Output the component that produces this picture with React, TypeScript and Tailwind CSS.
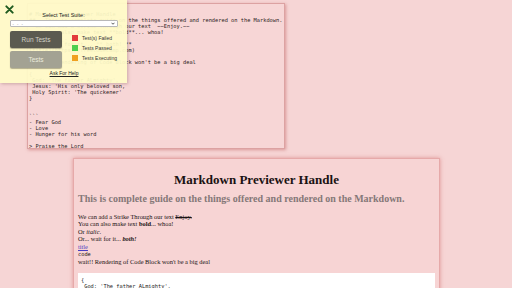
import React from "react";

const editorLines = [
  "# Markdown Previewer Handle",
  "##   This is complete guide on the things offered and rendered on the Markdown.",
  "  We can add a Strike Through our text  ~~Enjoy.~~",
  "  You can also make text **bold**... whoa!",
  "Or _italic_.",
  "Or... wait for it... **_both!_**",
  "[title](https://freecodecamp.com)",
  "`code`",
  "  wait!! Rendering of Code Block won't be a big deal",
  "```",
  "{",
  " God: 'The father ALmighty',",
  " Jesus: 'His only beloved son,",
  " Holy Spirit: 'The quickener'",
  "}",
  "",
  "",
  "```",
  "- Fear God",
  "- Love",
  "- Hunger for his word",
  "",
  "> Praise the Lord",
  "",
];

const codeLines = [
  "{",
  " God: 'The father ALmighty',",
  " Jesus: 'His only beloved son,",
  " Holy Spirit: 'The quickener'",
  "}",
];

function TestPanel() {
  return (
    <div className="absolute left-0 top-0 w-[127px] h-[83px] bg-[rgba(255,252,200,0.93)] shadow-[1px_1px_3px_rgba(120,80,80,0.35)] font-['Liberation_Sans',Arial,sans-serif]">
      <svg className="absolute left-[5px] top-[5px]" width="9" height="9" viewBox="0 0 10 10">
        <path d="M1.5 1.5 L8.5 8.5 M8.5 1.5 L1.5 8.5" stroke="#1f5a1f" strokeWidth="2.2" strokeLinecap="round" />
      </svg>
      <div className="flex flex-col items-center pt-[12px]">
        <div className="text-[5.5px] leading-[7px] text-[#222]">Select Test Suite:</div>
        <div className="mt-[1px] w-[108px] h-[7px] bg-white border border-[#b8b8b8] rounded-[1px] flex items-center justify-between px-[2px]">
          <span className="text-[4px] leading-[4px] text-[#555] tracking-[1px]">- - -</span>
          <svg width="4" height="3" viewBox="0 0 8 5">
            <path d="M1 1 L4 4 L7 1" stroke="#333" strokeWidth="1.6" fill="none" />
          </svg>
        </div>
      </div>
      <div className="flex gap-[10px] pl-[10px] mt-[4px]">
        <div className="flex flex-col gap-[3px]">
          <div className="w-[52px] h-[17px] rounded-[2px] bg-[#5b5a50] shadow-[0_1px_1px_rgba(0,0,0,0.3)] flex items-center justify-center text-[6.5px] text-[#d2d2c8]">
            Run Tests
          </div>
          <div className="w-[52px] h-[17px] rounded-[2px] bg-[#a3a293] shadow-[0_1px_1px_rgba(0,0,0,0.3)] flex items-center justify-center text-[6.5px] text-[#ececdc]">
            Tests
          </div>
        </div>
        <div className="flex flex-col gap-[4px] pt-[4px]">
          <div className="flex items-center gap-[4px]">
            <span className="w-[6px] h-[6px] bg-[#e33b3b]" />
            <span className="text-[5px] leading-[6px] text-[#333]">Test(s) Failed</span>
          </div>
          <div className="flex items-center gap-[4px]">
            <span className="w-[6px] h-[6px] bg-[#4fcf4f]" />
            <span className="text-[5px] leading-[6px] text-[#333]">Tests Passed</span>
          </div>
          <div className="flex items-center gap-[4px]">
            <span className="w-[6px] h-[6px] bg-[#f0a020]" />
            <span className="text-[5px] leading-[6px] text-[#333]">Tests Executing</span>
          </div>
        </div>
      </div>
      <div className="text-center mt-[2px] text-[5px] leading-[6px] underline text-[#222] pl-[1px]">Ask For Help</div>
    </div>
  );
}

export default function App() {
  return (
    <div className="relative w-[512px] h-[288px] overflow-hidden bg-[#f6d5d5]">
      <div className="flex flex-col items-start pt-[3px]">
        <div className="ml-[27px] w-[258px] h-[146px] overflow-hidden bg-[#f7d6d6] border border-[#dca2a2] shadow-[1px_1px_3px_rgba(200,110,110,0.6)]">
          <pre className="pl-[1px] pt-[7px] font-['DejaVu_Sans_Mono',monospace] text-[5.33px] leading-[6px] text-[#2a2020] whitespace-pre">
            {editorLines.join("\n")}
          </pre>
        </div>

        <div className="ml-[73px] mt-[9px] w-[367px] h-[140px] bg-[#f7d4d4] border border-[#e6a9a9] shadow-[0_0_4px_rgba(215,120,120,0.7)] px-[4px] font-['Liberation_Serif','Times_New_Roman',serif] text-[#1a1212]">
          <h1 className="mt-[13px] text-center text-[13px] leading-[15px] font-bold">Markdown Previewer Handle</h1>
          <h2 className="mt-[6px] text-[10px] leading-[12px] font-bold text-[#857878]">
            This is complete guide on the things offered and rendered on the Markdown.
          </h2>
          <div className="mt-[8px] text-[6.4px] leading-[7.4px]">
            <p>
              We can add a Strike Through our text <s>Enjoy.</s>
              <br />
              You can also make text <b>bold</b>... whoa!
              <br />
              Or <i>italic</i>.
              <br />
              Or... wait for it... <b><i>both!</i></b>
              <br />
              <a className="text-[#4a3cc0] underline">title</a>
              <br />
              <code className="font-['DejaVu_Sans_Mono',monospace] text-[5.33px]">code</code>
              <br />
              wait!! Rendering of Code Block won't be a big deal
            </p>
          </div>
          <pre className="mt-[7px] h-[40px] bg-white pl-[3px] pt-[4px] font-['DejaVu_Sans_Mono',monospace] text-[5.33px] leading-[6px] text-[#222] whitespace-pre">
            {codeLines.join("\n")}
          </pre>
        </div>
      </div>
      <TestPanel />
    </div>
  );
}
